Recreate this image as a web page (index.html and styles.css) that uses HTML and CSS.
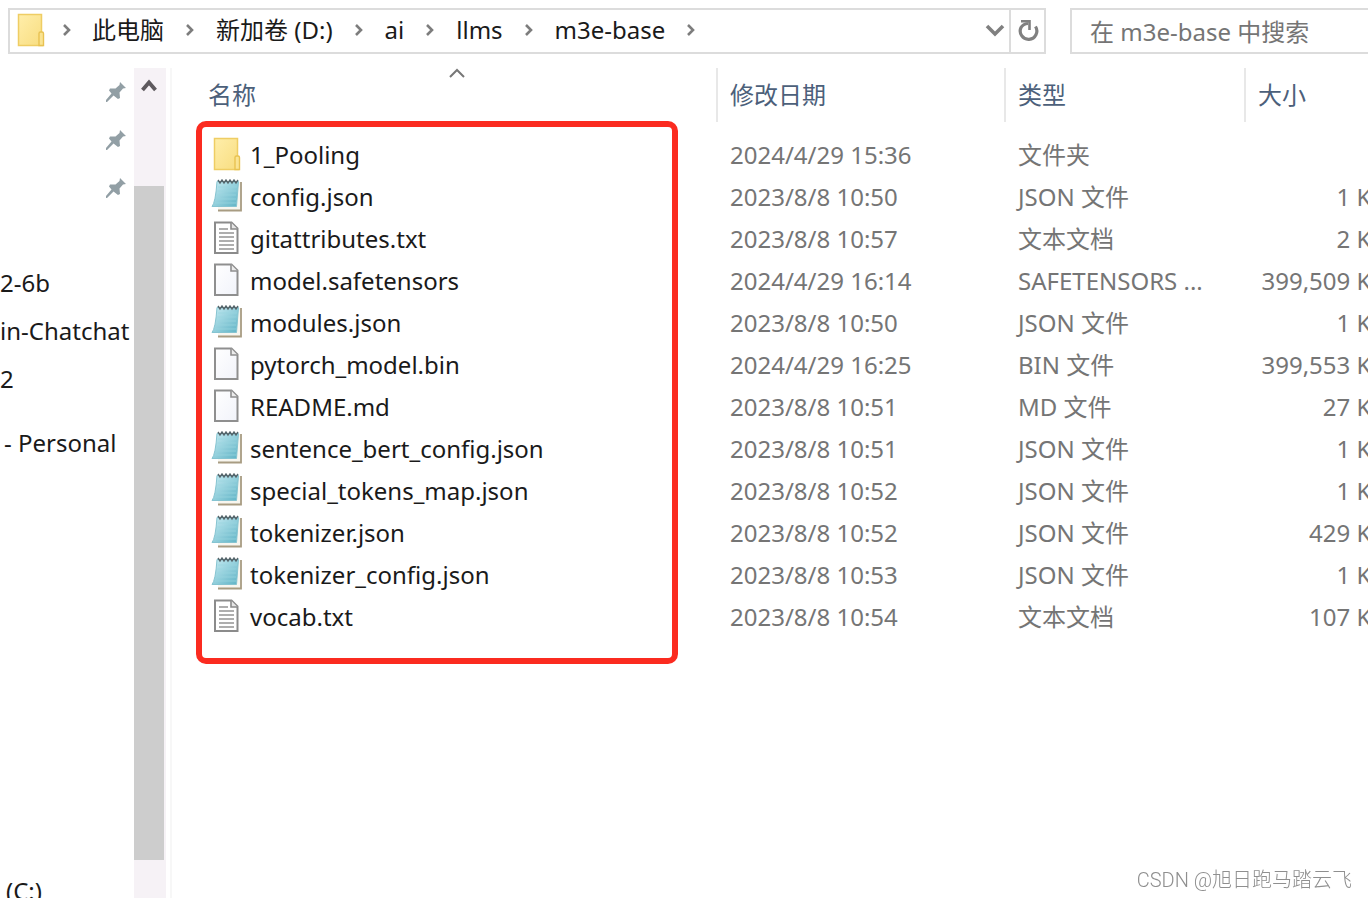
FILE: index.html
```html
<!DOCTYPE html>
<html lang="zh-CN">
<head>
<meta charset="UTF-8">
<meta name="viewport" content="width=device-width, initial-scale=1.0">
<title>m3e-base</title>
<link rel="stylesheet" href="styles.css">
</head>
<body>
<!-- Shared icons -->
<svg class="sprite" aria-hidden="true">
<defs>
<linearGradient id="folderFill" x1="0" y1="0" x2="1" y2="1">
<stop offset="0" stop-color="#ffeeaa"/>
<stop offset="1" stop-color="#f8dd80"/>
</linearGradient>
<linearGradient id="padFill" x1="0" y1="0" x2="1" y2="1">
<stop offset="0" stop-color="#c8ecf3"/>
<stop offset="1" stop-color="#5fb3c5"/>
</linearGradient>
<linearGradient id="pageFill" x1="0" y1="0" x2="1" y2="1">
<stop offset="0" stop-color="#ffffff"/>
<stop offset="1" stop-color="#f1f3fa"/>
</linearGradient>
</defs>
<symbol id="folder" viewBox="0 0 32 34">
<path d="M4.500 1.500h23v17.500l1 1v12.500h-24z" fill="url(#folderFill)" stroke="#efcd64" stroke-width="1.500"/>
<path d="M25 32.500V20.500q0-1.500 1.500-1.500h1.500q1.500 0 1.500 1.500v12z" fill="#fae493" stroke="#e8c252" stroke-width="1.400"/>
</symbol>
<symbol id="json" viewBox="0 0 32 34">
<path d="M8 31V3h22.500v28z" fill="#f8f6ef"/>
<path d="M8 31.500h23V3" fill="none" stroke="#a89c82" stroke-width="1.800"/>
<path d="M7 2.500h21.500L26.500 27.500H2q3.500-4 5-25z" fill="url(#padFill)" stroke="#86c4d1" stroke-width="1"/>
<path d="M8 8h19M7.500 12h19M7 16h19M6 20h20M5 24h21" stroke="#9ad6e0" stroke-width="1" opacity=".7"/>
<path d="M8 1l2 3 2-3 2 3 2-3 2 3 2-3 2 3 2-3 2 3 2-3" fill="none" stroke="#56666c" stroke-width="1.400"/>
</symbol>
<symbol id="txt" viewBox="0 0 32 34">
<path d="M5 1.500h16.500l6 6V32H5z" fill="#fff" stroke="#8b8b8b" stroke-width="2"/>
<path d="M21 1.500V8h6.500" fill="#e6e6e6" stroke="#8b8b8b" stroke-width="1.600"/>
<path d="M9 8h9M9 12h15M9 16h15M9 20h15M9 24h15M9 28h15" stroke="#949494" stroke-width="1.600"/>
</symbol>
<symbol id="file" viewBox="0 0 32 34">
<path d="M5 1.500h16.500l6 6V32H5z" fill="url(#pageFill)" stroke="#8f8f8f" stroke-width="2"/>
<path d="M21 1.500V8h6.500" fill="#ececec" stroke="#8f8f8f" stroke-width="1.600"/>
</symbol>
<symbol id="pin" viewBox="0 0 20 20">
<path d="M14 0l6 6-3 .5-3.500 4 .5 5.500-2 1-4.500-3.500L1 20H0v-2l5.500-6.500L3 8.500l1-2h5.500L13.500 3z" fill="#929fa5"/>
</symbol>
<symbol id="crumb" viewBox="0 0 10 14">
<path d="M2 2l5 5-5 5" fill="none" stroke="#7d7d7d" stroke-width="2.600"/>
</symbol>
</svg>

<div class="toolbar">
<nav class="address-bar">
<svg class="file-icon"><use href="#folder"/></svg>
<svg class="crumb-arrow"><use href="#crumb"/></svg>
<button class="crumb">此电脑</button>
<svg class="crumb-arrow"><use href="#crumb"/></svg>
<button class="crumb">新加卷 (D:)</button>
<svg class="crumb-arrow"><use href="#crumb"/></svg>
<button class="crumb">ai</button>
<svg class="crumb-arrow"><use href="#crumb"/></svg>
<button class="crumb">llms</button>
<svg class="crumb-arrow"><use href="#crumb"/></svg>
<button class="crumb">m3e-base</button>
<svg class="crumb-arrow"><use href="#crumb"/></svg>
<button class="history-button" aria-label="历史记录">
<svg width="20" height="14" viewBox="0 0 20 14"><path d="M2 3l8 8 8-8" fill="none" stroke="#808080" stroke-width="3.600"/></svg>
</button>
<button class="refresh-button" aria-label="刷新">
<svg width="22" height="24" viewBox="0 0 22 24"><path d="M18.500 7.500A8.300 8.300 0 1 1 4 8.500Q6 5 11 4.500" fill="none" stroke="#808080" stroke-width="3.200"/><path d="M4 2.300h8.500V11" fill="none" stroke="#808080" stroke-width="2.600"/></svg>
</button>
</nav>
<input class="search-box" type="text" aria-label="搜索" placeholder="在 m3e-base 中搜索">
</div>

<div class="main">
<aside class="sidebar">
<ul class="nav-list">
<li class="pinned"><svg class="pin-icon"><use href="#pin"/></svg></li>
<li class="pinned"><svg class="pin-icon"><use href="#pin"/></svg></li>
<li class="pinned"><svg class="pin-icon"><use href="#pin"/></svg></li>
<li></li>
<li>2-6b</li>
<li>in-Chatchat</li>
<li>2</li>
<li class="account">- Personal</li>
<li class="drive">(C:)</li>
</ul>
</aside>
<div class="scrollbar">
<button class="scroll-up" aria-label="向上滚动">
<svg width="16" height="14" viewBox="0 0 16 14"><path d="M1.500 12L8 4.500l6.500 7.500" fill="none" stroke="#5e5a5e" stroke-width="3.800"/></svg>
</button>
<div class="thumb"></div>
</div>

<div class="file-pane">
<table>
<colgroup>
<col>
<col class="col-date">
<col class="col-type">
<col class="col-size">
</colgroup>
<thead>
<tr>
<th class="name"><button>名称</button>
<svg class="sort-arrow" viewBox="0 0 18 12"><path d="M2 9l7-7 7 7" fill="none" stroke="#777" stroke-width="2"/></svg>
</th>
<th><button>修改日期</button></th>
<th><button>类型</button></th>
<th><button>大小</button></th>
</tr>
</thead>
<tbody>
<tr>
<td class="name"><div class="file"><svg class="file-icon"><use href="#folder"/></svg>1_Pooling</div></td>
<td>2024/4/29 15:36</td><td>文件夹</td><td class="size"></td>
</tr>
<tr>
<td class="name"><div class="file"><svg class="file-icon"><use href="#json"/></svg>config.json</div></td>
<td>2023/8/8 10:50</td><td>JSON 文件</td><td class="size">1 KB</td>
</tr>
<tr>
<td class="name"><div class="file"><svg class="file-icon"><use href="#txt"/></svg>gitattributes.txt</div></td>
<td>2023/8/8 10:57</td><td>文本文档</td><td class="size">2 KB</td>
</tr>
<tr>
<td class="name"><div class="file"><svg class="file-icon"><use href="#file"/></svg>model.safetensors</div></td>
<td>2024/4/29 16:14</td><td>SAFETENSORS ...</td><td class="size">399,509 KB</td>
</tr>
<tr>
<td class="name"><div class="file"><svg class="file-icon"><use href="#json"/></svg>modules.json</div></td>
<td>2023/8/8 10:50</td><td>JSON 文件</td><td class="size">1 KB</td>
</tr>
<tr>
<td class="name"><div class="file"><svg class="file-icon"><use href="#file"/></svg>pytorch_model.bin</div></td>
<td>2024/4/29 16:25</td><td>BIN 文件</td><td class="size">399,553 KB</td>
</tr>
<tr>
<td class="name"><div class="file"><svg class="file-icon"><use href="#file"/></svg>README.md</div></td>
<td>2023/8/8 10:51</td><td>MD 文件</td><td class="size">27 KB</td>
</tr>
<tr>
<td class="name"><div class="file"><svg class="file-icon"><use href="#json"/></svg>sentence_bert_config.json</div></td>
<td>2023/8/8 10:51</td><td>JSON 文件</td><td class="size">1 KB</td>
</tr>
<tr>
<td class="name"><div class="file"><svg class="file-icon"><use href="#json"/></svg>special_tokens_map.json</div></td>
<td>2023/8/8 10:52</td><td>JSON 文件</td><td class="size">1 KB</td>
</tr>
<tr>
<td class="name"><div class="file"><svg class="file-icon"><use href="#json"/></svg>tokenizer.json</div></td>
<td>2023/8/8 10:52</td><td>JSON 文件</td><td class="size">429 KB</td>
</tr>
<tr>
<td class="name"><div class="file"><svg class="file-icon"><use href="#json"/></svg>tokenizer_config.json</div></td>
<td>2023/8/8 10:53</td><td>JSON 文件</td><td class="size">1 KB</td>
</tr>
<tr>
<td class="name"><div class="file"><svg class="file-icon"><use href="#txt"/></svg>vocab.txt</div></td>
<td>2023/8/8 10:54</td><td>文本文档</td><td class="size">107 KB</td>
</tr>
</tbody>
</table>
<div class="highlight"></div>
</div>
</div>

<div class="watermark">CSDN @旭日跑马踏云飞</div>
</body>
</html>
```
FILE: styles.css
```css
* {
box-sizing: border-box;
}

body {
margin: 0;
height: 100vh;
display: flex;
flex-direction: column;
overflow: hidden;
background-color: #fff;
color: #1a1a1a;
font-family: "Noto Sans", "Noto Sans CJK SC", sans-serif;
font-size: 24px;
line-height: 32px;
}

button {
padding: 0;
border: none;
background: none;
color: inherit;
font: inherit;
}

.sprite {
position: absolute;
width: 0;
height: 0;
}

/* Address bar and search */
.toolbar {
display: flex;
gap: 24px;
padding: 8px 0 14px 8px;
}

.address-bar {
flex: 1;
display: flex;
align-items: center;
height: 46px;
padding: 0 0 2px 4px;
border: 2px solid #dcdcdc;
white-space: nowrap;
}

.file-icon {
flex: none;
width: 32px;
height: 34px;
}

.crumb-arrow {
flex: none;
width: 10px;
height: 14px;
margin: 0 21px;
}

.address-bar .file-icon + .crumb-arrow {
margin: 0 20px 0 16px;
}

.history-button {
display: flex;
margin-left: auto;
padding-right: 4px;
}

.refresh-button {
display: flex;
align-items: center;
justify-content: center;
align-self: stretch;
width: 35px;
margin-bottom: -2px;
border-left: 2px solid #dcdcdc;
}

.search-box {
width: 298px;
height: 46px;
padding: 0 18px;
border: 2px solid #dcdcdc;
border-right: none;
border-radius: 0;
background-color: #fff;
font: inherit;
}

.search-box::placeholder {
color: #757575;
}

.main {
flex: 1;
display: flex;
min-height: 0;
}

/* Navigation pane */
.sidebar {
flex: none;
width: 134px;
overflow: hidden;
}

.nav-list {
display: flex;
flex-direction: column;
margin: 0;
padding: 0;
list-style: none;
white-space: nowrap;
}

.nav-list li {
display: flex;
align-items: center;
height: 48px;
padding-bottom: 2px;
}

.nav-list .pinned {
justify-content: flex-end;
padding: 0 8px 0 0;
}

.nav-list .account {
margin-top: 16px;
padding-left: 4px;
}

.nav-list .drive {
margin-top: 400px;
padding-left: 6px;
}

.pin-icon {
width: 20px;
height: 20px;
}

.scrollbar {
flex: none;
display: flex;
flex-direction: column;
width: 32px;
padding-bottom: 38px;
background-color: #f6f2f6;
}

.scroll-up {
display: flex;
justify-content: center;
height: 118px;
padding: 10px 2px 0 0;
}

.thumb {
flex: 1;
width: 30px;
background-color: #cdcdcd;
}

/* File list */
.file-pane {
flex: 1;
position: relative;
margin-left: 4px;
border-left: 2px solid #f7f7f7;
}

table {
width: calc(100% + 25px);
table-layout: fixed;
border-collapse: separate;
border-spacing: 0;
white-space: nowrap;
}

.col-date {
width: 288px;
}

.col-type {
width: 240px;
}

.col-size {
width: 149px;
}

th,
td {
padding: 0 0 0 14px;
text-align: left;
font-weight: normal;
}

th {
height: 54px;
border-left: 2px solid #e8e8e8;
padding-left: 12px;
color: #4c607a;
}

th.name {
position: relative;
border-left: none;
padding-left: 36px;
}

.sort-arrow {
position: absolute;
top: 0;
left: calc(50% + 4px);
width: 18px;
height: 12px;
}

tbody::before {
content: "";
display: block;
height: 12px;
}

td {
height: 42px;
color: #757575;
}

td.name {
padding-left: 38px;
color: #1a1a1a;
}

td.size {
padding: 0 6px 0 0;
text-align: right;
}

.file {
display: flex;
align-items: center;
gap: 8px;
}

.file .file-icon {
margin-bottom: 2px;
}

.highlight {
position: absolute;
top: 53px;
left: 24px;
width: 482px;
height: 543px;
border: 6px solid #fb2b20;
border-radius: 10px;
pointer-events: none;
}

.watermark {
position: fixed;
right: 16px;
bottom: 4px;
color: #8f8f8f;
font-family: Roboto, "Noto Sans CJK SC", sans-serif;
font-weight: 300;
font-size: 20px;
line-height: 28px;
}
```
